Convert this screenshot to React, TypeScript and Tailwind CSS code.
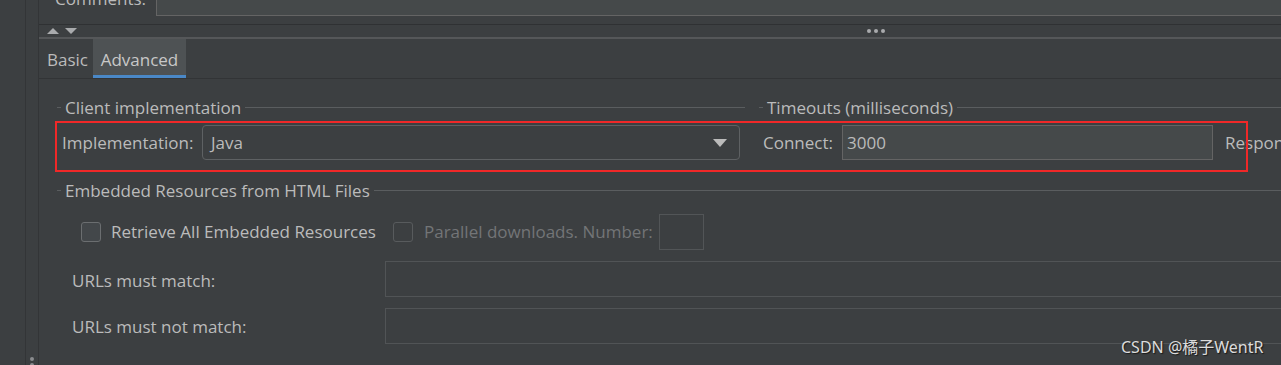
import React from "react";

const font = { fontFamily: '"Open Sans", "Noto Sans", sans-serif' };

function FieldTitle({ title, className = "" }: { title: string; className?: string }) {
  return (
    <div className={`flex items-center h-[20px] ${className}`}>
      <div className="w-[4px] h-px bg-[#5a5d5f] shrink-0" />
      <span className="px-[4px] text-[17px] leading-none text-[#bbbbbb] whitespace-nowrap">{title}</span>
      <div className="flex-1 h-px bg-[#5a5d5f]" />
    </div>
  );
}

function Checkbox({ disabled }: { disabled?: boolean }) {
  return (
    <div
      className={`w-[20px] h-[20px] rounded-[3px] border shrink-0 ${
        disabled ? "border-[#585b5d]" : "border-[#6b6e70] bg-[#43474a]"
      }`}
    />
  );
}

export default function App() {
  return (
    <div className="w-[1281px] h-[365px] bg-[#3c3f41] flex overflow-hidden relative" style={font}>
      {/* outer strips */}
      <div className="w-[26px] h-full border-r border-[#333537] shrink-0" />
      <div className="w-[13px] h-full border-r border-[#333537] shrink-0 flex flex-col items-center justify-end gap-[2px]">
        <div className="w-[4px] h-[4px] rounded-full bg-[#8a8c8e]" />
        <div className="w-[4px] h-[4px] rounded-full bg-[#8a8c8e] -mb-[2px]" />
      </div>

      <div className="flex-1 flex flex-col min-w-0">
        {/* comments row, cut off at top */}
        <div className="h-[25px] border-b border-[#2f3133] flex shrink-0">
          <span className="ml-[16px] w-[101px] shrink-0 text-[17px] leading-none text-[#bbbbbb] -mt-[10px]">Comments:</span>
          <div className="flex-1 h-[16px] bg-[#45494a] border-l border-b border-[#646464]" />
        </div>

        {/* splitter row */}
        <div className="h-[14px] border-b-2 border-[#555759] flex items-center shrink-0">
          <svg width="12" height="6" viewBox="0 0 12 6" className="ml-[8px] shrink-0">
            <path d="M0 6 L6 0 L12 6 Z" fill="#a9abad" />
          </svg>
          <svg width="12" height="6" viewBox="0 0 12 6" className="ml-[6px] shrink-0">
            <path d="M0 0 L12 0 L6 6 Z" fill="#a9abad" />
          </svg>
          <div className="ml-[790px] flex gap-[3px]">
            <div className="w-[4px] h-[4px] rounded-full bg-[#a9abad]" />
            <div className="w-[4px] h-[4px] rounded-full bg-[#a9abad]" />
            <div className="w-[4px] h-[4px] rounded-full bg-[#a9abad]" />
          </div>
        </div>

        {/* tabs */}
        <div className="h-[40px] border-b border-[#323436] flex shrink-0 text-[17px]">
          <div className="pl-[8px] pr-[5px] pt-[2px] flex items-center text-[#bbbbbb]">Basic</div>
          <div className="w-[93px] pt-[5px] bg-[#4e5254] border-b-[3px] border-[#4a88c7] flex items-center justify-center text-[#c8c8c8]">
            Advanced
          </div>
        </div>

        {/* client implementation / timeouts */}
        <div className="mt-[18px] flex shrink-0">
          <FieldTitle title="Client implementation" className="ml-[18px] w-[688px] shrink-0" />
          <FieldTitle title="Timeouts (milliseconds)" className="ml-[14px] flex-1" />
        </div>

        <div className="relative mt-[8px] h-[35px] flex items-center shrink-0 text-[17px] text-[#bbbbbb]">
          <span className="ml-[23px] w-[140px] shrink-0">Implementation:</span>
          <div className="w-[538px] shrink-0 h-full rounded-[4px] border border-[#5e6163] flex items-center justify-between pl-[8px] pr-[12px]">
            <span>Java</span>
            <svg width="14" height="8" viewBox="0 0 14 8">
              <path d="M0 0 L14 0 L7 8 Z" fill="#bbbbbb" />
            </svg>
          </div>
          <span className="ml-[23px] w-[79px] shrink-0">Connect:</span>
          <div className="w-[371px] shrink-0 h-full bg-[#45494a] border border-[#646464] flex items-center pl-[4px]">3000</div>
          <span className="ml-[12px] shrink-0 whitespace-nowrap">Response timeout:</span>
          {/* red annotation frame */}
          <div className="absolute left-[16px] -top-[4px] w-[1193px] h-[51px] ring-2 ring-inset ring-[#f02828] pointer-events-none" />
        </div>

        {/* embedded resources */}
        <FieldTitle title="Embedded Resources from HTML Files" className="mt-[20px] ml-[18px] shrink-0" />

        <div className="mt-[14px] h-[36px] flex items-center shrink-0 text-[17px]">
          <div className="ml-[42px] shrink-0">
            <Checkbox />
          </div>
          <span className="ml-[10px] w-[282px] shrink-0 text-[#bbbbbb] whitespace-nowrap">Retrieve All Embedded Resources</span>
          <Checkbox disabled />
          <span className="ml-[11px] w-[235px] shrink-0 text-[#737577] whitespace-nowrap">Parallel downloads. Number:</span>
          <div className="w-[45px] shrink-0 h-full border border-[#525557]" />
        </div>

        <div className="mt-[11px] h-[36px] flex items-center shrink-0 text-[17px] text-[#bbbbbb]">
          <span className="ml-[33px] pt-[3px] w-[313px] shrink-0">URLs must match:</span>
          <div className="flex-1 h-full border border-r-0 border-[#515456]" />
        </div>

        <div className="mt-[11px] h-[36px] flex items-center shrink-0 text-[17px] text-[#bbbbbb]">
          <span className="ml-[33px] pt-[2px] w-[313px] shrink-0">URLs must not match:</span>
          <div className="flex-1 h-full border border-r-0 border-[#515456]" />
        </div>
      </div>

      {/* watermark */}
      <div
        className="absolute left-[1121px] top-[335px] text-[16px] leading-[24px] text-[#dcdcdc] whitespace-nowrap [text-shadow:1px_1px_1px_#1a1a1a]"
        style={{ fontFamily: '"Noto Sans", "Noto Sans CJK SC", sans-serif' }}
      >
        CSDN @橘子WentR
      </div>
    </div>
  );
}
